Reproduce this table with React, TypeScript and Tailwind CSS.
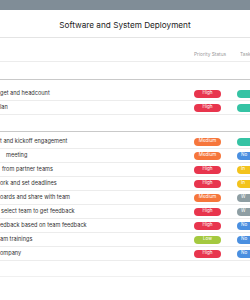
import React from "react";

type Row = { text: string; pl?: number; pri: "High" | "Medium" | "Low"; task: string };

const priColor: Record<string, string> = {
  High: "bg-[#e8354d]",
  Medium: "bg-[#f6763b]",
  Low: "bg-[#a4c93f]",
};

const taskColor: Record<string, string> = {
  teal: "bg-[#35c3a4]",
  blue: "bg-[#4a8fe0]",
  yellow: "bg-[#f3c31c]",
  gray: "bg-[#8e9ea3]",
};

const taskText: Record<string, string> = {
  teal: "",
  blue: "No",
  yellow: "In",
  gray: "W",
};

const section1: Row[] = [
  { text: "get and headcount", pri: "High", task: "teal" },
  { text: "lan", pri: "High", task: "teal" },
];

const section2: Row[] = [
  { text: "t and kickoff engagement", pri: "Medium", task: "teal" },
  { text: "meeting", pl: 6, pri: "Medium", task: "blue" },
  { text: "from partner teams", pl: 2, pri: "High", task: "yellow" },
  { text: "ork and set deadlines", pri: "High", task: "yellow" },
  { text: "oards and share with team", pri: "Medium", task: "gray" },
  { text: "select team to get feedback", pl: 1, pri: "High", task: "gray" },
  { text: "edback based on team feedback", pri: "High", task: "blue" },
  { text: "am trainings", pri: "Low", task: "blue" },
  { text: "ompany", pri: "High", task: "blue" },
];

function TableRow({ r }: { r: Row }) {
  return (
    <div className="h-[14px] flex items-center border-b border-[#ececec] shrink-0">
      <div
        className="flex-1 text-[5.6px] text-[#333] whitespace-nowrap overflow-hidden"
        style={{ paddingLeft: r.pl ?? 0 }}
      >
        {r.text}
      </div>
      <div className="w-[43px] flex justify-start">
        <div
          className={`w-[27px] h-[8px] rounded-full ${priColor[r.pri]} text-white text-[4.6px] flex items-center justify-center`}
        >
          {r.pri}
        </div>
      </div>
      <div className="w-[13px] overflow-hidden">
        <div
          className={`w-[27px] h-[8px] rounded-full ${taskColor[r.task]} text-white text-[4.6px] flex items-center pl-[4px] whitespace-nowrap`}
        >
          {taskText[r.task]}
        </div>
      </div>
    </div>
  );
}

export default function App() {
  return (
    <div
      className="w-[250px] h-[300px] overflow-hidden bg-white flex flex-col"
      style={{ fontFamily: "Inter, 'Liberation Sans', sans-serif" }}
    >
      <div className="h-[10px] bg-[#808d97] shrink-0" />
      <div className="h-[28px] pt-[4px] flex items-center justify-center border-b border-[#e4e4e4] shrink-0 text-[8.2px] text-[#222]">
        Software and System Deployment
      </div>
      <div className="h-[24px] flex items-end pb-[3px] border-b border-[#ececec] shrink-0 text-[4.8px] text-[#9a9a9a]">
        <div className="flex-1" />
        <div className="w-[46px] whitespace-nowrap">Priority Status</div>
        <div className="w-[10px] whitespace-nowrap overflow-hidden">Task</div>
      </div>
      <div className="h-[18px] border-b border-[#c9c9c9] shrink-0" />
      <div className="pt-[7px] flex flex-col shrink-0">
        {section1.map((r, i) => (
          <TableRow key={i} r={r} />
        ))}
      </div>
      <div className="h-[17px] border-b border-[#c9c9c9] shrink-0" />
      <div className="pt-[3px] flex flex-col shrink-0">
        {section2.map((r, i) => (
          <TableRow key={i} r={r} />
        ))}
      </div>
      <div className="h-[16px] border-b border-[#f0f0f0] shrink-0" />
    </div>
  );
}
